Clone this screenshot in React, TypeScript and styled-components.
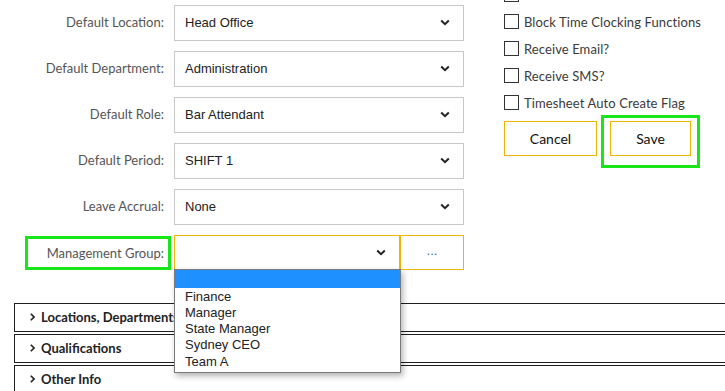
import React from "react";
import styled, { createGlobalStyle } from "styled-components";

const Global = createGlobalStyle`
  html, body { margin: 0; padding: 0; background: #fff; }
  body { font-family: Lato, "Open Sans", sans-serif; }
  * { box-sizing: border-box; }
`;

const Page = styled.div`
  width: 725px;
  height: 391px;
  overflow: hidden;
  position: relative;
`;

const Top = styled.div`
  display: flex;
  align-items: flex-start;
`;

const Form = styled.div`
  width: 464px;
  padding-top: 5px;
  display: flex;
  flex-direction: column;
  gap: 10px;
`;

const Row = styled.div`
  display: grid;
  grid-template-columns: 171px 1fr;
  column-gap: 3px;
  align-items: center;
  height: 36px;
`;

const Label = styled.div<{ $highlight?: boolean }>`
  font-family: Lato, sans-serif;
  font-size: 13px;
  color: #555;
  text-align: right;
  padding-right: ${(p) => (p.$highlight ? "4px" : "7px")};
  margin-top: -2px;
  ${(p) =>
    p.$highlight
      ? `
    margin-left: 25px;
    border: 3px solid #19e619;
    height: 34px;
    display: flex;
    align-items: center;
    justify-content: flex-end;
    margin-top: -1px;
  `
      : ""}
`;

const SelectBox = styled.div<{ $focus?: boolean }>`
  position: relative;
  height: ${(p) => (p.$focus ? "35px" : "36px")};
  border: 1px solid ${(p) => (p.$focus ? "#f2b600" : "#c8c8c8")};
  display: flex;
  align-items: center;
  justify-content: space-between;
  padding: 0 13px 1px 10px;
  font-family: "Liberation Sans", Arial, sans-serif;
  font-size: 13px;
  color: #222;
  background: #fff;
`;

const ControlPair = styled.div`
  display: flex;
  align-items: flex-start;
  height: 36px;
`;

const Dots = styled.div`
  width: 64px;
  height: 35px;
  border: 1px solid #f2b600;
  background: #fff;
  color: #1a6fc0;
  font-family: "Liberation Sans", Arial, sans-serif;
  font-size: 13px;
  display: flex;
  align-items: center;
  justify-content: center;
  padding-bottom: 4px;
`;

const DropList = styled.div`
  position: absolute;
  left: -1px;
  top: 100%;
  width: 227px;
  background: #fff;
  border: 1px solid #7a7a7a;
  box-shadow: 2px 3px 6px rgba(0, 0, 0, 0.3);
  padding-bottom: 3px;
  z-index: 10;
  font-family: "Liberation Sans", Arial, sans-serif;
  font-size: 13px;
  color: #222;
`;

const Option = styled.div<{ $active?: boolean }>`
  height: ${(p) => (p.$active ? "18px" : "16.3px")};
  line-height: 16.3px;
  padding-left: 10px;
  padding-top: 0.5px;
  background: ${(p) => (p.$active ? "#1e90ff" : "transparent")};
`;

const Side = styled.div`
  margin-left: 40px;
  margin-top: -13px;
  display: flex;
  flex-direction: column;
`;

const CheckList = styled.div`
  display: flex;
  flex-direction: column;
  gap: 12px;
`;

const CheckRow = styled.label`
  display: flex;
  align-items: center;
  gap: 5px;
  height: 15px;
  font-family: Lato, sans-serif;
  font-size: 13px;
  color: #3a3a3a;
  white-space: nowrap;
  letter-spacing: 0.1px;
`;

const Box = styled.span`
  width: 15px;
  height: 15px;
  border: 1px solid #333;
  background: #fff;
  flex: none;
`;

const Buttons = styled.div`
  display: flex;
  align-items: flex-start;
  margin-top: 5px;
`;

const Btn = styled.button<{ $w: number }>`
  width: ${(p) => p.$w}px;
  height: 35px;
  border: 1px solid #f2b600;
  background: #fff;
  font-family: Lato, sans-serif;
  font-size: 14px;
  color: #111;
  margin: 0;
  padding: 0;
`;

const CancelWrap = styled.div`
  padding-top: 6px;
`;

const Highlight = styled.div`
  margin-left: 4px;
  border: 3px solid #19e619;
  padding: 3px 6px 9px 6px;
`;

const Accordions = styled.div`
  margin-top: 32px;
  margin-left: 14px;
  width: 760px;
  display: flex;
  flex-direction: column;
  gap: 2px;
`;

const Panel = styled.div`
  height: 29px;
  border: 1px solid #1e1e1e;
  display: flex;
  align-items: center;
  padding: 0 0 1px 15px;
  gap: 6px;
  font-family: Lato, sans-serif;
  font-weight: 700;
  font-size: 13px;
  color: #222;
`;

const Chevron = () => (
  <svg width="10" height="7" viewBox="0 0 10 7">
    <polyline points="1.2,1.5 5,5.2 8.8,1.5" fill="none" stroke="#222" strokeWidth="2" />
  </svg>
);

const RightChevron = () => (
  <svg width="5" height="8" viewBox="0 0 5 8">
    <polyline points="0.8,0.8 4,4 0.8,7.2" fill="none" stroke="#222" strokeWidth="1.6" />
  </svg>
);

const selects: [string, string][] = [
  ["Default Location:", "Head Office"],
  ["Default Department:", "Administration"],
  ["Default Role:", "Bar Attendant"],
  ["Default Period:", "SHIFT 1"],
  ["Leave Accrual:", "None"],
];

const groups = ["Finance", "Manager", "State Manager", "Sydney CEO", "Team A"];

const checks = [
  "",
  "Block Time Clocking Functions",
  "Receive Email?",
  "Receive SMS?",
  "Timesheet Auto Create Flag",
];

export default function App() {
  return (
    <Page>
      <Global />
      <Top>
        <Form>
          {selects.map(([l, v]) => (
            <Row key={l}>
              <Label>{l}</Label>
              <SelectBox>
                <span>{v}</span>
                <Chevron />
              </SelectBox>
            </Row>
          ))}
          <Row>
            <Label $highlight>Management Group:</Label>
            <ControlPair>
              <SelectBox $focus style={{ width: 226 }}>
                <span />
                <Chevron />
                <DropList>
                  <Option $active />
                  {groups.map((g) => (
                    <Option key={g}>{g}</Option>
                  ))}
                </DropList>
              </SelectBox>
              <Dots>...</Dots>
            </ControlPair>
          </Row>
        </Form>
        <Side>
          <CheckList>
            {checks.map((c, i) => (
              <CheckRow key={i}>
                <Box />
                {c}
              </CheckRow>
            ))}
          </CheckList>
          <Buttons>
            <CancelWrap>
              <Btn $w={93}>Cancel</Btn>
            </CancelWrap>
            <Highlight>
              <Btn $w={81}>Save</Btn>
            </Highlight>
          </Buttons>
        </Side>
      </Top>
      <Accordions>
        <Panel>
          <RightChevron />
          Locations, Departments and Roles
        </Panel>
        <Panel>
          <RightChevron />
          Qualifications
        </Panel>
        <Panel>
          <RightChevron />
          Other Info
        </Panel>
      </Accordions>
    </Page>
  );
}
